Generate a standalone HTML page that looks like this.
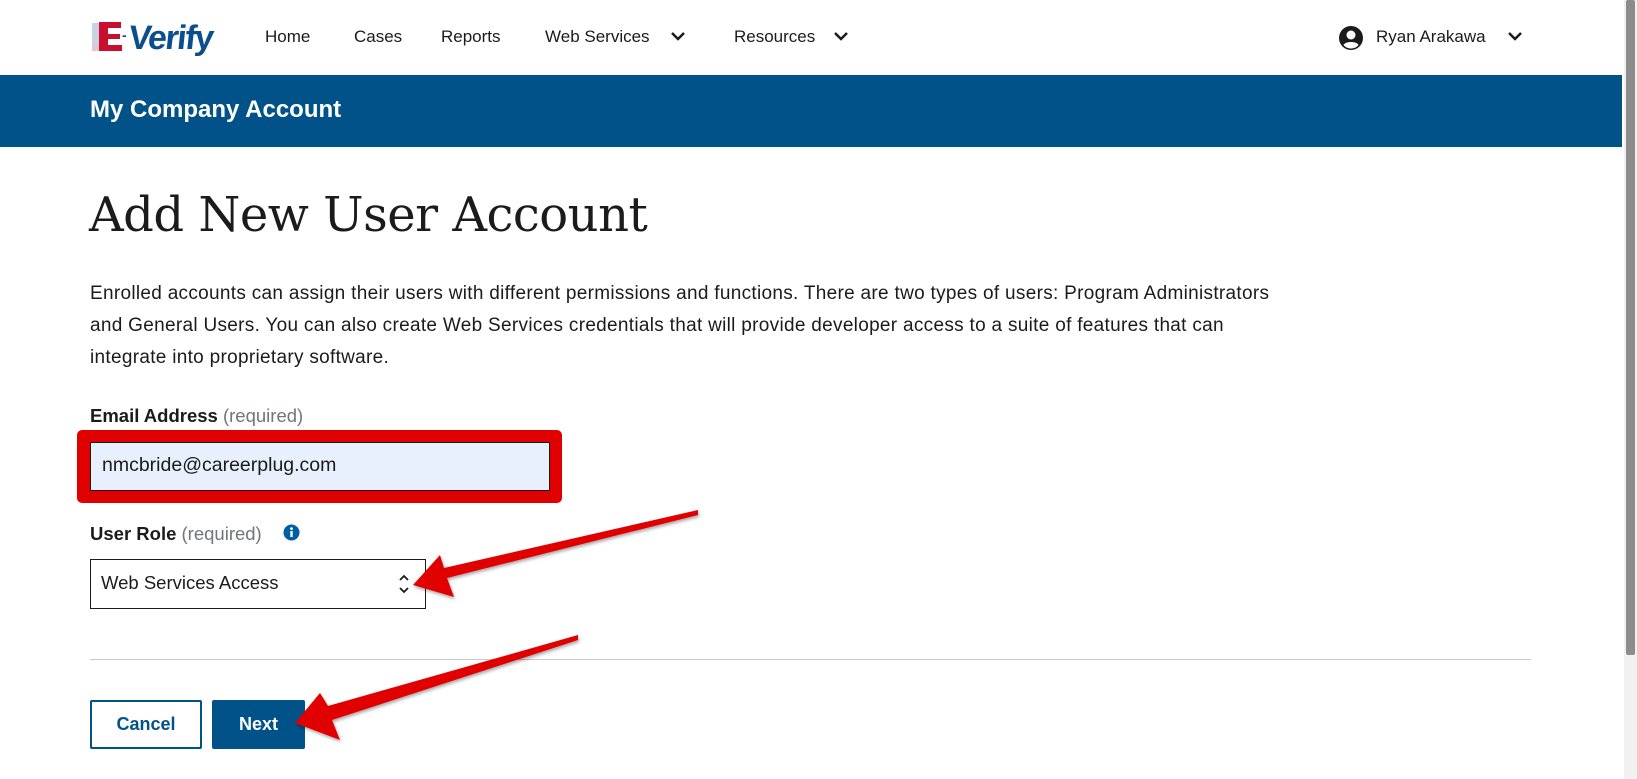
<!DOCTYPE html>
<html><head><meta charset="utf-8"><style>
*{margin:0;padding:0;box-sizing:border-box}
body{width:1637px;height:779px;overflow:hidden;background:#fff;font-family:"Liberation Sans",sans-serif;color:#1b1b1b;position:relative}
.a{position:absolute;white-space:nowrap}
.nav{font-size:17px;top:27px}
.band{position:absolute;left:0;top:75px;width:1622px;height:72px;background:#005288}
.sb{position:absolute;left:1624px;top:0;width:13px;height:779px;background:#f1f1f1}
.sb div{position:absolute;left:2px;top:0;width:9px;height:655px;background:#8c8c8c;border-radius:2px}
p.a{font-size:19px;letter-spacing:0.3px;line-height:32px;left:90px;top:278px}
.lbl{font-size:18.5px;font-weight:bold}
.lbl span{font-weight:normal;color:#71767a}
</style></head><body>
<div class="sb"><div></div></div>
<svg class="a" style="left:90px;top:18px" width="145" height="38" viewBox="0 0 145 38">
<rect x="2" y="5" width="14" height="22" fill="#c8d3e6"/><rect x="2" y="27" width="20" height="6" fill="#e6c6cc"/>
<path d="M9 4h22v6h-13v6h12v5h-12v6h14v6h-23z" fill="#c8102e"/>
<text x="32" y="22" font-family="Liberation Sans" font-size="14" font-weight="bold" fill="#0b4e8c">-</text>
<text x="38" y="31" font-family="Liberation Sans" font-size="34" font-weight="bold" fill="#0b4e8c" letter-spacing="-1.5" transform="skewX(-6) translate(3,0)">Verify</text>
</svg>
<div class="a nav" style="left:265px">Home</div>
<div class="a nav" style="left:354px">Cases</div>
<div class="a nav" style="left:441px">Reports</div>
<div class="a nav" style="left:545px">Web Services</div>
<div class="a nav" style="left:734px">Resources</div>
<svg class="a" style="left:670px;top:30px" width="16" height="12"><path d="M2 3l6 6 6-6" stroke="#1b1b1b" stroke-width="2.5" fill="none"/></svg>
<svg class="a" style="left:833px;top:30px" width="16" height="12"><path d="M2 3l6 6 6-6" stroke="#1b1b1b" stroke-width="2.5" fill="none"/></svg>
<svg class="a" style="left:1338px;top:25px" width="26" height="26" viewBox="0 0 26 26"><circle cx="13" cy="13" r="12" fill="#1b1b1b"/><circle cx="13" cy="10" r="4.5" fill="#fff"/><path d="M5.5 20c2-4 13-4 15 0c-2 2.5-5 3.5-7.5 3.5s-5.5-1-7.5-3.5z" fill="#fff"/></svg>
<div class="a nav" style="left:1376px">Ryan Arakawa</div>
<svg class="a" style="left:1507px;top:30px" width="16" height="12"><path d="M2 3l6 6 6-6" stroke="#1b1b1b" stroke-width="2.5" fill="none"/></svg>
<div class="band"></div>
<div class="a" style="left:90px;top:96px;color:#fff;font-size:24px;font-weight:bold">My Company Account</div>
<div class="a" style="left:89px;top:187px;font-family:'DejaVu Serif',serif;font-size:48px;letter-spacing:-0.5px">Add New User Account</div>
<p class="a">Enrolled accounts can assign their users with different permissions and functions. There are two types of users: Program Administrators<br>and General Users. You can also create Web Services credentials that will provide developer access to a suite of features that can<br>integrate into proprietary software.</p>
<div class="a lbl" style="left:90px;top:405px">Email Address <span>(required)</span></div>
<div class="a" style="left:77px;top:430px;width:485px;height:73px;background:#e00000;border-radius:5px"></div>
<div class="a" style="left:90px;top:442px;width:460px;height:49px;background:#e8f0fe;border:1.5px solid #1b1b1b;font-size:19.5px;padding:11px 0 0 11px">nmcbride@careerplug.com</div>
<div class="a lbl" style="left:90px;top:523px">User Role <span>(required)</span></div>
<svg class="a" style="left:283px;top:524px" width="17" height="17"><circle cx="8.5" cy="8.5" r="8" fill="#005ea2"/><rect x="7.3" y="7" width="2.4" height="6" fill="#fff"/><circle cx="8.5" cy="4.6" r="1.4" fill="#fff"/></svg>
<div class="a" style="left:90px;top:559px;width:336px;height:50px;border:1.5px solid #1b1b1b;font-size:18.5px;padding:12px 0 0 10px">Web Services Access</div>
<svg class="a" style="left:398px;top:573px" width="12" height="22"><path d="M2 7l4-4 4 4M2 15l4 4 4-4" stroke="#1b1b1b" stroke-width="1.8" fill="none"/></svg>
<div class="a" style="left:90px;top:659px;width:1441px;height:1px;background:#c9c9c9"></div>
<div class="a" style="left:90px;top:700px;width:112px;height:49px;border:2px solid #005288;color:#005288;font-weight:bold;font-size:18px;text-align:center;line-height:45px;border-radius:2px">Cancel</div>
<div class="a" style="left:212px;top:700px;width:93px;height:49px;background:#005288;color:#fff;font-weight:bold;font-size:18px;text-align:center;line-height:49px;border-radius:2px">Next</div>
<svg class="a" style="left:0;top:0" width="1637" height="779">
<defs><filter id="s"><feDropShadow dx="1" dy="2" stdDeviation="1.5" flood-opacity="0.35"/></filter></defs>
<g fill="#e00000" filter="url(#s)">
<path d="M698 510 L698 515 L447 578 L454 597 L413 585 L440 555 L444 568 Z"/>
<path d="M578 635 L578 640 L332 720 L340 740 L295 723 L320 693 L328 706 Z"/>
</g></svg>
</body></html>
